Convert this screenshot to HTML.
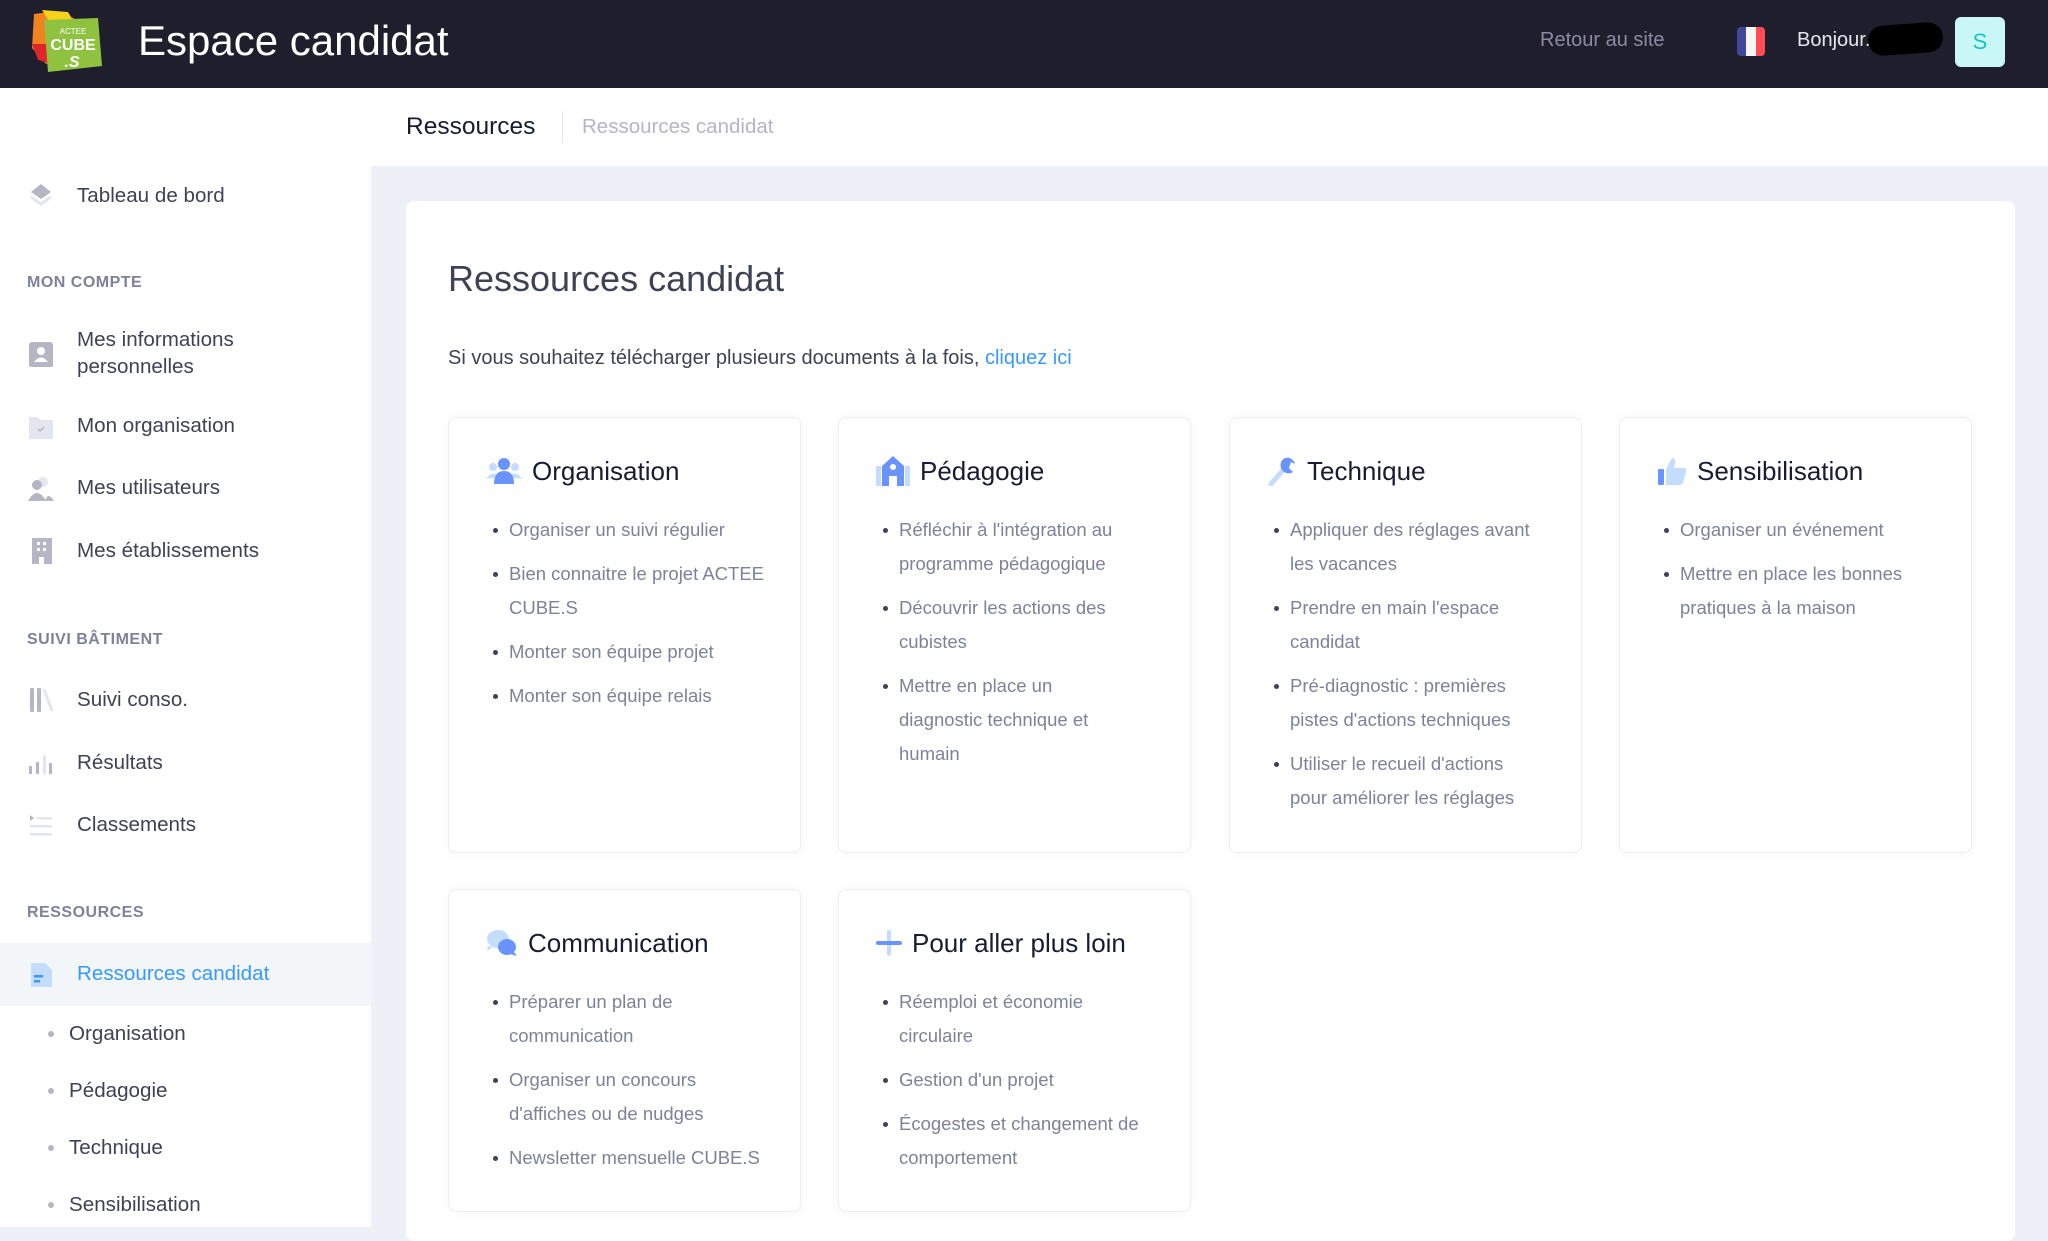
<!DOCTYPE html>
<html><head><meta charset="utf-8">
<style>
*{margin:0;padding:0;box-sizing:border-box}
body{width:2048px;height:1227px;overflow:hidden;background:#eef0f8;font-family:"Liberation Sans",sans-serif;position:relative}
.abs{position:absolute}
#hdr{left:0;top:0;width:2048px;height:88px;background:#1f1e2d}
#side{left:0;top:88px;width:371px;height:1139px;background:#fff}
#bc{left:371px;top:88px;width:1677px;height:78px;background:#fff}
.si{position:absolute;left:77px;font-size:20.6px;color:#3f4254;transform:translateY(-50%);white-space:nowrap}
.sh{position:absolute;left:27px;font-size:16px;color:#7e8299;font-weight:bold;letter-spacing:.5px;transform:translateY(-50%)}
.ic{position:absolute;left:28px;width:26px;height:26px;transform:translateY(-50%)}
.sub{position:absolute;left:69px;font-size:20.6px;color:#3f4254;transform:translateY(-50%)}
.dot{position:absolute;left:48px;width:6px;height:6px;border-radius:50%;background:#b5b5c3;transform:translateY(-50%)}
#main{left:406px;top:201px;width:1609px;height:1040px;background:#fff;border-radius:8px}
.card{position:absolute;width:353px;background:#fff;border:1px solid #eceef4;border-radius:8px;box-shadow:0 0 12px rgba(80,90,140,.05)}
.ct{position:absolute;top:36px;left:37px;font-size:26px;color:#181c32;white-space:nowrap;display:flex;align-items:center;height:34px}
.ct svg{margin-right:10px}
ul{position:absolute;top:95px;left:60px;list-style:none}
li{position:relative;font-size:18.5px;line-height:34px;color:#7e8299;margin-bottom:10px;white-space:nowrap}
li:before{content:"";position:absolute;left-16px;left:-16px;top:15px;width:5px;height:5px;border-radius:50%;background:#3f4254}
</style></head><body>
<div id="hdr" class="abs">
 <svg class="abs" style="left:28px;top:8px" width="76" height="66" viewBox="0 0 76 66">
  <polygon points="6,6 22,4 46,10 44,50 18,56 4,40" fill="#f0831f"/>
  <polygon points="14,2 40,4 46,14 20,12" fill="#f7d21a"/>
  <polygon points="4,36 22,36 30,58 10,52" fill="#e0262a"/>
  <polygon points="16,12 70,10 74,58 20,64" fill="#8fc33f"/>
  <text x="45" y="26" font-size="8" fill="#fff" text-anchor="middle" font-family="Liberation Sans">ACTEE</text>
  <text x="45" y="42" font-size="16" fill="#fff" text-anchor="middle" font-family="Liberation Sans" font-weight="bold">CUBE</text>
  <text x="44" y="59" font-size="16" fill="#fff" text-anchor="middle" font-family="Liberation Sans" font-weight="bold" font-style="italic">.S</text>
 </svg>
 <div class="abs" style="left:138px;top:17px;font-size:42px;color:#fff">Espace candidat</div>
 <div class="abs" style="left:1540px;top:29px;font-size:20px;color:#8a8ca3">Retour au site</div>
 <div class="abs" style="left:1737px;top:27px;width:28px;height:29px;border-radius:4px;overflow:hidden;display:flex"><div style="flex:1;background:#41479b"></div><div style="flex:1;background:#f5f5f5"></div><div style="flex:1;background:#ff4b55"></div></div>
 <div class="abs" style="left:1797px;top:29px;font-size:20px;color:#e4e6ef">Bonjour.</div>
 <div class="abs" style="left:1868px;top:24px;width:75px;height:30px;border-radius:15px;background:#000;transform:rotate(-4deg)"></div>
 <div class="abs" style="left:1955px;top:17px;width:50px;height:50px;border-radius:6px;background:#c9f7f5;color:#1bc5bd;font-size:22px;text-align:center;line-height:50px">S</div>
</div>
<div id="side" class="abs"></div>
<svg class="ic" style="top:196px" viewBox="0 0 26 26"><path d="M13 16 L3 9 L13 1 L23 9Z" fill="#b5b5c3"/><path d="M3 14 L13 21 L23 14" fill="none" stroke="#e4e6ef" stroke-width="3"/></svg>
<div class="si" style="top:196px">Tableau de bord</div>
<div class="sh" style="top:283px">MON COMPTE</div>
<svg class="ic" style="top:354px" viewBox="0 0 26 26"><rect x="1" y="1" width="24" height="26" rx="3" fill="#b5b5c3"/><circle cx="13" cy="10" r="4" fill="#fff"/><path d="M6 21 Q13 12 20 21Z" fill="#fff"/></svg>
<div class="si" style="top:340px">Mes informations</div>
<div class="si" style="top:367px">personnelles</div>
<svg class="ic" style="top:427px" viewBox="0 0 26 26"><path d="M1 3 H10 L12 6 H25 V25 H1Z" fill="#e4e6ef"/><path d="M10 15 L12 17 L16 13" stroke="#b5b5c3" stroke-width="1.5" fill="none"/></svg>
<div class="si" style="top:426px">Mon organisation</div>
<svg class="ic" style="top:489px" viewBox="0 0 26 26"><circle cx="15" cy="6" r="5" fill="#e4e6ef"/><circle cx="9" cy="9" r="5" fill="#b5b5c3"/><path d="M0 25 Q9 9 18 25Z" fill="#b5b5c3"/><path d="M17 25 Q20 15 26 25Z" fill="#b5b5c3"/></svg>
<div class="si" style="top:488px">Mes utilisateurs</div>
<svg class="ic" style="top:551px" viewBox="0 0 26 26"><rect x="4" y="0" width="20" height="26" fill="#b5b5c3"/><rect x="9" y="4" width="3" height="3" fill="#fff"/><rect x="15" y="4" width="3" height="3" fill="#fff"/><rect x="9" y="10" width="3" height="3" fill="#fff"/><rect x="15" y="10" width="3" height="3" fill="#fff"/><rect x="11" y="19" width="5" height="7" fill="#fff"/></svg>
<div class="si" style="top:551px">Mes établissements</div>
<div class="sh" style="top:640px">SUIVI BÂTIMENT</div>
<svg class="ic" style="top:700px" viewBox="0 0 26 26"><rect x="2" y="1" width="4" height="24" rx="1" fill="#b5b5c3"/><rect x="9" y="1" width="4" height="24" rx="1" fill="#b5b5c3"/><path d="M16 2 L24 24" stroke="#e4e6ef" stroke-width="3"/></svg>
<div class="si" style="top:700px">Suivi conso.</div>
<svg class="ic" style="top:763px" viewBox="0 0 26 26"><rect x="1" y="16" width="3" height="8" rx="1" fill="#b5b5c3"/><rect x="8" y="12" width="3" height="12" rx="1" fill="#b5b5c3"/><rect x="15" y="5" width="3" height="19" rx="1" fill="#e4e6ef"/><rect x="21" y="13" width="3" height="11" rx="1" fill="#b5b5c3"/></svg>
<div class="si" style="top:763px">Résultats</div>
<svg class="ic" style="top:826px" viewBox="0 0 26 26"><path d="M2 2 L6 5 L2 8Z" fill="#b5b5c3"/><rect x="9" y="4" width="15" height="2.5" fill="#e4e6ef"/><rect x="2" y="12" width="22" height="2.5" fill="#e4e6ef"/><rect x="2" y="20" width="22" height="2.5" fill="#e4e6ef"/></svg>
<div class="si" style="top:825px">Classements</div>
<div class="sh" style="top:913px">RESSOURCES</div>
<div class="abs" style="left:0;top:943px;width:371px;height:63px;background:#f3f6f9"></div>
<svg class="ic" style="top:975px" viewBox="0 0 26 26"><path d="M3 1 H17 L24 8 V25 H3Z" fill="#c4ddff"/><rect x="6" y="13" width="9" height="2.5" fill="#3699ff"/><rect x="6" y="18" width="6" height="2.5" fill="#3699ff"/></svg>
<div class="si" style="top:974px;color:#3699ff">Ressources candidat</div>
<div class="dot" style="top:1034px"></div><div class="sub" style="top:1034px">Organisation</div>
<div class="dot" style="top:1091px"></div><div class="sub" style="top:1091px">Pédagogie</div>
<div class="dot" style="top:1148px"></div><div class="sub" style="top:1148px">Technique</div>
<div class="dot" style="top:1205px"></div><div class="sub" style="top:1205px">Sensibilisation</div>

<div id="bc" class="abs">
 <div class="abs" style="left:35px;top:25px;font-size:24.5px;color:#181c32">Ressources</div>
 <div class="abs" style="left:191px;top:23px;width:1px;height:32px;background:#e4e6ef"></div>
 <div class="abs" style="left:211px;top:27px;font-size:20.5px;color:#b5b5c3">Ressources candidat</div>
</div>
<div id="main" class="abs">
 <div class="abs" style="left:42px;top:57px;font-size:36px;color:#3f4254">Ressources candidat</div>
 <div class="abs" style="left:42px;top:146px;font-size:20px;color:#3f4254">Si vous souhaitez télécharger plusieurs documents à la fois, <span style="color:#3699ff">cliquez ici</span></div>
</div>

<div class="card" style="left:448px;top:417px;height:436px">
 <div class="ct"><svg width="36" height="28" viewBox="0 0 36 28"><circle cx="7" cy="10" r="4" fill="#c4ddff"/><circle cx="29" cy="10" r="4" fill="#c4ddff"/><path d="M0 22 Q7 12 13 20Z M23 20 Q29 12 36 22Z" fill="#c4ddff"/><circle cx="18" cy="7" r="6" fill="#6993ff"/><path d="M8 27 Q8 14 18 14 Q28 14 28 27Z" fill="#6993ff"/></svg>Organisation</div>
 <ul><li>Organiser un suivi régulier</li><li>Bien connaitre le projet ACTEE<br>CUBE.S</li><li>Monter son équipe projet</li><li>Monter son équipe relais</li></ul>
</div>
<div class="card" style="left:838px;top:417px;height:436px">
 <div class="ct"><svg width="34" height="30" viewBox="0 0 34 30"><rect x="0" y="10" width="5" height="20" fill="#c4ddff"/><rect x="29" y="10" width="5" height="20" fill="#c4ddff"/><path d="M6 30 V10 L17 0 L28 10 V30 H21 V20 H13 V30Z" fill="#6993ff"/><circle cx="17" cy="11" r="3" fill="#fff"/></svg>Pédagogie</div>
 <ul><li>Réfléchir à l'intégration au<br>programme pédagogique</li><li>Découvrir les actions des<br>cubistes</li><li>Mettre en place un<br>diagnostic technique et<br>humain</li></ul>
</div>
<div class="card" style="left:1229px;top:417px;height:436px">
 <div class="ct"><svg width="30" height="30" viewBox="0 0 30 30"><path d="M4 28 L16 14" stroke="#c4ddff" stroke-width="5" stroke-linecap="round"/><path d="M14 12 A8 8 0 0 0 26 16 L22 12 L24 6 L28 8 A8 8 0 0 0 18 2 A8 8 0 0 0 14 12Z" fill="#6993ff"/></svg>Technique</div>
 <ul><li>Appliquer des réglages avant<br>les vacances</li><li>Prendre en main l'espace<br>candidat</li><li>Pré-diagnostic : premières<br>pistes d'actions techniques</li><li>Utiliser le recueil d'actions<br>pour améliorer les réglages</li></ul>
</div>
<div class="card" style="left:1619px;top:417px;height:436px">
 <div class="ct"><svg width="30" height="30" viewBox="0 0 30 30"><path d="M9 13 L15 2 Q19 2 18 8 L17 12 H27 Q30 12 29 16 L26 27 Q25 29 22 29 H9Z" fill="#c4ddff"/><rect x="1" y="13" width="6" height="16" rx="1" fill="#6993ff"/></svg>Sensibilisation</div>
 <ul><li>Organiser un événement</li><li>Mettre en place les bonnes<br>pratiques à la maison</li></ul>
</div>
<div class="card" style="left:448px;top:889px;height:323px">
 <div class="ct"><svg width="32" height="28" viewBox="0 0 32 28"><ellipse cx="12" cy="10" rx="11" ry="9" fill="#c4ddff"/><path d="M2 17 L1 22 L7 18Z" fill="#c4ddff"/><ellipse cx="21" cy="18" rx="9" ry="8" fill="#6993ff"/><path d="M28 23 L31 27 L24 25Z" fill="#6993ff"/></svg>Communication</div>
 <ul><li>Préparer un plan de<br>communication</li><li>Organiser un concours<br>d'affiches ou de nudges</li><li>Newsletter mensuelle CUBE.S</li></ul>
</div>
<div class="card" style="left:838px;top:889px;height:323px">
 <div class="ct"><svg width="26" height="26" viewBox="0 0 26 26"><rect x="11" y="0" width="4" height="26" rx="2" fill="#c4ddff"/><rect x="0" y="11" width="26" height="4" rx="2" fill="#6993ff"/></svg>Pour aller plus loin</div>
 <ul><li>Réemploi et économie<br>circulaire</li><li>Gestion d'un projet</li><li>Écogestes et changement de<br>comportement</li></ul>
</div>
</body></html>
